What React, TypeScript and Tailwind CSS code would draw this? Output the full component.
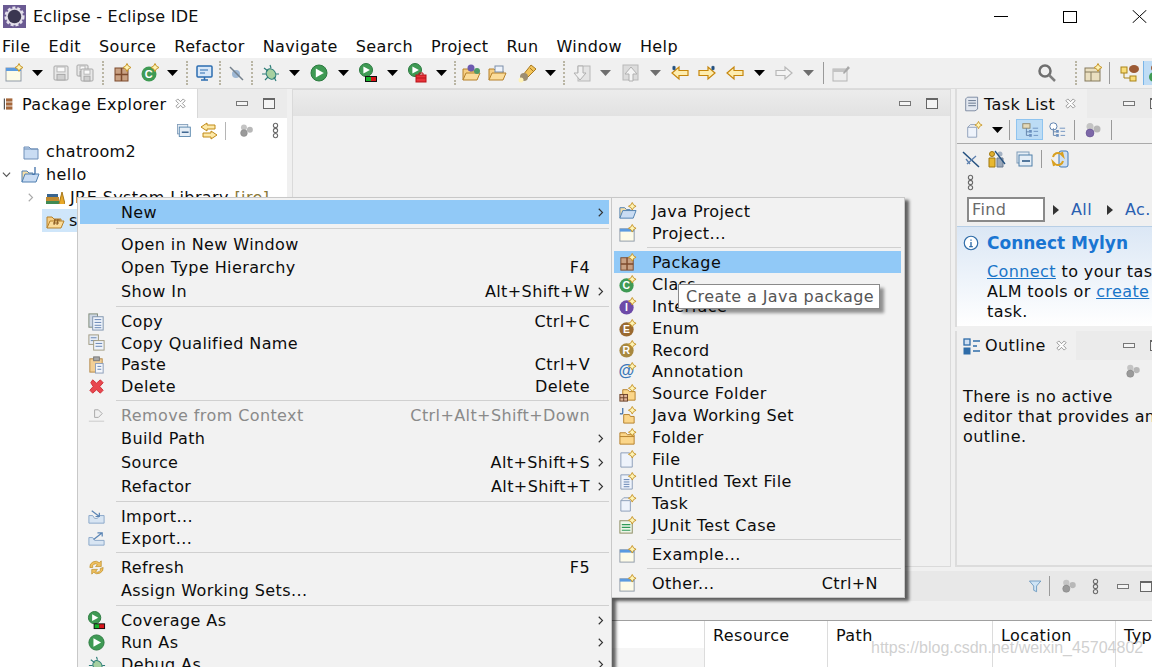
import type { ReactNode } from "react";

const Star = () => (
  <path d="M15 0.5l1.4 2.6 2.6 1.4-2.6 1.4L15 8.5l-1.4-2.6L11 4.500l2.600-1.400z" fill="#fdf3b5" stroke="#c8962a" strokeWidth="1" />
);

const Letter = ({ c, bg, fill = "#fff", size = 11 }: { c: string; bg: string; fill?: string; size?: number }) => (
  <>
    <circle cx="9" cy="11" r="7.500" fill={bg} />
    <text x="9" y="15" textAnchor="middle" fontSize={size} fontWeight="700" fontFamily="Liberation Sans, sans-serif" fill={fill}>{c}</text>
    <Star />
  </>
);

const RunDot = ({ cx = 10, cy = 10, r = 8 }: { cx?: number; cy?: number; r?: number }) => (
  <>
    <circle cx={cx} cy={cy} r={r} fill="#3f9a54" stroke="#2c7a40" />
    <path d={`M${cx - r * 0.4} ${cy - r * 0.55}L${cx + r * 0.6} ${cy}L${cx - r * 0.4} ${cy + r * 0.55}z`} fill="#fff" />
  </>
);

const Folder = ({ fill = "#fbdc9a", stroke = "#b5802a" }: { fill?: string; stroke?: string }) => (
  <>
    <path d="M2 17V6h5l2 2h7v2" fill="#f6cf85" stroke={stroke} />
    <path d="M2 17l3-7h14l-3 7z" fill={fill} stroke={stroke} />
  </>
);

const Page = ({ x = 3, w = 12 }: { x?: number; w?: number }) => (
  <path d={`M${x} 3h${w - 3}l3 3v12h-${w}z`} fill="#eef3fb" stroke="#8b9db8" />
);

const Lines = ({ x = 6, c = "#5f7fb0" }: { x?: number; c?: string }) => (
  <path d={`M${x} 8h6M${x} 10.500h6M${x} 13h6M${x} 15.500h6`} stroke={c} strokeWidth="1" />
);

const Win = () => (
  <>
    <rect x="2" y="5" width="15" height="13" fill="#fdfbe8" stroke="#8f9aa8" />
    <rect x="2" y="5" width="15" height="3" fill="#5b9be0" />
    <Star />
  </>
);

const Floppy = ({ x = 3, y = 3, s = 14 }: { x?: number; y?: number; s?: number }) => (
  <>
    <rect x={x} y={y} width={s} height={s} rx="1" fill="#e8e8e8" stroke="#a8a8a8" />
    <rect x={x + 3} y={y + 1} width={s - 6} height={s * 0.35} fill="#fafafa" stroke="#b8b8b8" />
    <rect x={x + 3} y={y + s * 0.6} width={s - 6} height={s * 0.4} fill="#cfcfcf" stroke="#a8a8a8" />
  </>
);

const Grid = () => (
  <>
    <rect x="3" y="5" width="13" height="13" fill="#c9a183" stroke="#7d4a2c" />
    <path d="M9.500 5v13M3 11.500h13" stroke="#7d4a2c" strokeWidth="1.500" />
    <Star />
  </>
);

const YArrow = ({ flip = false, dim = false, star = false }: { flip?: boolean; dim?: boolean; star?: boolean }) => (
  <g transform={flip ? "matrix(-1 0 0 1 20 0)" : undefined}>
    <path d="M2 10l7-6v3.500h9v5H9V16z" fill={dim ? "#f4f4f4" : "#fdedb0"} stroke={dim ? "#b8b8b8" : "#c6860c"} strokeWidth="1.200" />
    {star && <path d="M3 3l2 4M5 3L3 7M2 5h4" stroke="#23507f" strokeWidth="1.200" />}
  </g>
);

const Blob = ({ tone = "#9a9a9a", dark = "#7a7a7a" }: { tone?: string; dark?: string }) => (
  <>
    <circle cx="7" cy="6.500" r="3.500" fill="#c4c4c4" />
    <circle cx="14" cy="9" r="3.500" fill="#b8b8b8" />
    <circle cx="7" cy="13" r="4" fill={tone} stroke={dark} strokeWidth=".5" />
  </>
);

const Tree = ({ folderTop = true }: { folderTop?: boolean }) => (
  <>
    {folderTop ? <rect x="2" y="3" width="8" height="5" fill="#e4d9b8" stroke="#8c8468" /> : <circle cx="6" cy="6" r="4" fill="#fff" stroke="#4f76a8" />}
    <path d="M6 8v8h3M6 12h3" stroke="#6080a8" fill="none" />
    <rect x="9" y="10" width="3" height="3" fill="#6a8fbe" />
    <rect x="9" y="14.500" width="3" height="3" fill="#6a8fbe" />
    <path d="M13 8h6M14 11.500h5M14 16h5" stroke="#6a8fbe" />
  </>
);

const icons: Record<string, ReactNode> = {
  newwin: <Win />,
  save: <Floppy />,
  saveall: (
    <>
      <Floppy x={2} y={2} s={11} />
      <Floppy x={6} y={6} s={12} />
    </>
  ),
  pkg: <Grid />,
  cls: <Letter c="C" bg="#3f9a54" />,
  itf: <Letter c="I" bg="#6d4aa8" />,
  enm: <Letter c="E" bg="#9a6a30" />,
  rec: <Letter c="R" bg="#a9893f" />,
  ann: <Letter c="@" bg="#f2f2f2" fill="#3b78b8" size={17} />,
  monitor: (
    <>
      <rect x="3" y="3" width="15" height="11" rx="1" fill="#d9e8f8" stroke="#2b6cb0" strokeWidth="1.500" />
      <path d="M6 7h8M6 10h5" stroke="#2b6cb0" />
      <path d="M7 17h7M10.500 14v3" stroke="#2b6cb0" strokeWidth="1.500" />
    </>
  ),
  skip: (
    <>
      <circle cx="10" cy="11" r="4" fill="#9db7d4" />
      <path d="M4 4l13 13" stroke="#74808c" strokeWidth="1.500" />
    </>
  ),
  bug: (
    <>
      <ellipse cx="11" cy="11" rx="4.500" ry="5.500" transform="rotate(-35 11 11)" fill="#a6d0a0" stroke="#2d7d78" />
      <path d="M4 5l4 3M2 11h4M5 17l3-3M16 18l-2-4M19 11h-3M10 2l1 3" stroke="#2d7d78" strokeWidth="1.200" />
    </>
  ),
  run: <RunDot />,
  cov: (
    <>
      <RunDot cx={8} cy={7} r={6.500} />
      <rect x="7" y="13" width="12" height="6" fill="#111" />
      <rect x="8" y="14" width="5" height="4" fill="#17b32c" />
      <rect x="13" y="14" width="5" height="4" fill="#d8141a" />
    </>
  ),
  ext: (
    <>
      <RunDot cx={8} cy={7} r={6.500} />
      <rect x="9" y="12" width="10" height="7" fill="#e8333a" stroke="#b81218" />
      <path d="M12 12v-2h4v2M9 15h10" stroke="#b81218" fill="none" />
    </>
  ),
  opentype: (
    <>
      <Folder />
      <circle cx="10" cy="5" r="3.500" fill="#6d5ab0" />
      <circle cx="16" cy="8" r="3" fill="#4f9a68" />
    </>
  ),
  openres: (
    <>
      <Folder />
      <rect x="8" y="3" width="8" height="6" fill="#eef3fb" stroke="#7b8da8" />
    </>
  ),
  torch: (
    <>
      <path d="M6 12L14 2l5 4-9 9z" fill="#f2c45a" stroke="#a87820" />
      <path d="M13 5l3 3" stroke="#a87820" />
      <circle cx="7" cy="14" r="4" fill="#9d8d70" />
      <circle cx="4" cy="17" r="2.500" fill="#fff3b8" />
    </>
  ),
  down: (
    <>
      <rect x="6" y="3" width="12" height="15" fill="#e4e4e4" stroke="#b8b8b8" />
      <path d="M6 3h5v7h3l-6 7-6-7h4z" fill="#f0f0f0" stroke="#b0b0b0" />
    </>
  ),
  up: (
    <>
      <rect x="2" y="2" width="15" height="15" fill="#dcdcdc" stroke="#b8b8b8" />
      <path d="M8 18v-7H4l6-7 6 7h-4v7z" fill="#f4f4f4" stroke="#b0b0b0" />
    </>
  ),
  back2: <YArrow star />,
  fwd2: <YArrow flip star />,
  left: <YArrow />,
  right: <YArrow flip dim />,
  pin: (
    <>
      <rect x="2" y="6" width="14" height="12" fill="#eeeeee" stroke="#b4b4b4" />
      <rect x="2" y="6" width="14" height="3" fill="#c4c4c4" />
      <path d="M12 10l5-7 2 2-6 6z" fill="#a8a8a8" />
    </>
  ),
  search: (
    <>
      <circle cx="8" cy="8" r="5.500" fill="none" stroke="#6f6f6f" strokeWidth="2.500" />
      <path d="M12 12l6 6" stroke="#7f7f7f" strokeWidth="2.500" />
    </>
  ),
  persp: (
    <>
      <rect x="2" y="5" width="15" height="13" fill="#eadfc0" stroke="#857a5c" />
      <path d="M2 9h15M8 9v9" stroke="#857a5c" />
      <Star />
    </>
  ),
  hier: (
    <>
      <rect x="1" y="4" width="6" height="6" fill="#f9dd7a" stroke="#a98318" />
      <rect x="10" y="13" width="6" height="5" fill="#f9dd7a" stroke="#a98318" />
      <path d="M4 10v5h6" stroke="#a98318" fill="none" />
      <ellipse cx="14" cy="6" rx="5" ry="4" fill="#9c5a34" />
    </>
  ),
  javap: (
    <>
      <circle cx="10" cy="5" r="3" fill="#9c5a34" />
      <circle cx="10" cy="14" r="5" fill="#3f9a54" />
    </>
  ),
  pkgex: (
    <>
      <path d="M3 3v14" stroke="#555" strokeWidth="1.500" />
      <rect x="5" y="3" width="8" height="4" fill="#a5673b" />
      <rect x="5" y="8" width="8" height="4" fill="#a5673b" />
      <rect x="5" y="13" width="8" height="4" fill="#a5673b" />
    </>
  ),
  collapse: (
    <>
      <rect x="3" y="3" width="12" height="11" fill="#e6eef6" stroke="#7f9cb8" />
      <rect x="5" y="6" width="13" height="11" fill="#e6eef6" stroke="#4f7fa8" />
      <path d="M8 12h8" stroke="#23507f" strokeWidth="1.500" />
    </>
  ),
  link: (
    <>
      <path d="M8 2L2 6l6 4V8h8V4H8z" fill="#fde9a8" stroke="#c08a18" />
      <path d="M12 10l6 4-6 4v-2H4v-4h8z" fill="#fde9a8" stroke="#c08a18" />
    </>
  ),
  gray: <Blob />,
  purple: <Blob tone="#7d68a8" dark="#5d4888" />,
  chain: (
    <>
      <circle cx="10" cy="4" r="2.500" fill="none" stroke="#6c6c6c" strokeWidth="1.300" />
      <circle cx="10" cy="10" r="2.500" fill="none" stroke="#6c6c6c" strokeWidth="1.300" />
      <circle cx="10" cy="16" r="2.500" fill="none" stroke="#6c6c6c" strokeWidth="1.300" />
    </>
  ),
  proj: (
    <>
      <path d="M3 17V5h5l2 2h7v10z" fill="#c9dcf3" stroke="#6f8fb8" />
      <path d="M3 7h14" stroke="#6f8fb8" />
    </>
  ),
  jproj: (
    <>
      <path d="M2 17V6h5l2 2h4" fill="#f6dfa8" stroke="#4f7fb0" />
      <path d="M2 17l3-8h14l-3 8z" fill="#c9dcf3" stroke="#4f7fb0" />
      <path d="M15 2v6q0 2-3 1" fill="none" stroke="#3f6fa8" strokeWidth="1.300" />
    </>
  ),
  jprojn: (
    <>
      <path d="M2 17V6h5l2 2h4" fill="#f6dfa8" stroke="#4f7fb0" />
      <path d="M2 17l3-8h14l-3 8z" fill="#c9dcf3" stroke="#4f7fb0" />
      <Star />
    </>
  ),
  src: (
    <>
      <Folder />
      <path d="M9 9h6M8 12h6M10 8l-1 6M13 8l-1 6" stroke="#8a5a20" />
    </>
  ),
  lib: (
    <>
      <rect x="1" y="13" width="13" height="3" fill="#3f8a54" />
      <rect x="1" y="9" width="13" height="4" fill="#c08a30" />
      <rect x="2" y="6" width="11" height="3" fill="#39658f" />
      <path d="M14 16l3-12 3 12" fill="#e8a828" stroke="#a87818" />
    </>
  ),
  task: (
    <>
      <path d="M4 2h12v14l-3 2H2V4z" fill="#e3e8f0" stroke="#6f7f98" />
      <path d="M5 6h9M5 9h9M5 12h9" stroke="#54647e" />
    </>
  ),
  tasknew: (
    <>
      <path d="M3 7h10v11H3z" fill="#eef3fb" stroke="#8b9db8" />
      <path d="M3 7l3-3h6" fill="none" stroke="#8b9db8" />
      <Star />
    </>
  ),
  treea: <Tree />,
  treeb: <Tree folderTop={false} />,
  xline: (
    <>
      <path d="M2 3l16 15" stroke="#23507f" strokeWidth="1.500" />
      <path d="M6 15l9-8M5 10l4 5" stroke="#5b7fae" strokeWidth="1.300" />
    </>
  ),
  people: (
    <>
      <circle cx="6" cy="5" r="2.500" fill="#e0b030" stroke="#a07810" />
      <path d="M3 9h6v9H3z" fill="#e8b830" stroke="#a07810" />
      <circle cx="14" cy="5" r="2.500" fill="#a4b2c4" />
      <path d="M11 9h6v9h-6z" fill="#9aa8ba" stroke="#6a7a90" />
      <path d="M9 2l10 13" stroke="#23507f" strokeWidth="1.300" />
    </>
  ),
  sync: (
    <>
      <rect x="9" y="2" width="9" height="16" rx="2" fill="#cfe0f3" stroke="#3f78b8" />
      <path d="M3 8a5 5 0 0 1 8-3l2 2-1-4M13 12a5 5 0 0 1-8 3l-2-2 1 4" fill="none" stroke="#d8a020" strokeWidth="2" />
    </>
  ),
  info: (
    <>
      <circle cx="10" cy="10" r="7.500" fill="#fff" stroke="#2f6ca8" strokeWidth="1.300" />
      <path d="M10 6v1.500M10 9v5M8 14h4" stroke="#2f6ca8" strokeWidth="1.500" />
    </>
  ),
  outline: (
    <>
      <rect x="2" y="3" width="6" height="6" fill="#cfe0f3" stroke="#2f6ca8" strokeWidth="1.300" />
      <rect x="2" y="12" width="6" height="6" fill="#2f6ca8" stroke="#2f6ca8" />
      <path d="M11 5h7M11 10h4M11 15h7" stroke="#2f6ca8" strokeWidth="1.300" />
    </>
  ),
  copy: (
    <>
      <rect x="2" y="2" width="9" height="14" fill="#cfd8e4" stroke="#7e8a78" />
      <rect x="6" y="5" width="11" height="14" fill="#eef3fb" stroke="#7f93ad" />
      <path d="M8 8h7M8 11h7M8 14h7M8 16.500h7" stroke="#6483b2" />
    </>
  ),
  copyq: (
    <>
      <rect x="2" y="2" width="10" height="10" fill="#e6ecf5" stroke="#a09a80" />
      <path d="M4 5h6M4 8h6" stroke="#6483b2" />
      <rect x="7" y="8" width="11" height="10" fill="#eef3fb" stroke="#a09a80" />
      <path d="M9 11h7M9 14h7" stroke="#6483b2" />
    </>
  ),
  paste: (
    <>
      <rect x="3" y="4" width="13" height="14" fill="#f2cf96" stroke="#b58a4a" />
      <rect x="7" y="2" width="6" height="4" fill="#a8a8a8" stroke="#787878" />
      <rect x="9" y="9" width="8" height="10" fill="#f4f7fc" stroke="#8b9db8" />
      <path d="M11 12h4M11 15h4" stroke="#6483b2" />
    </>
  ),
  del: <path d="M4 6l2-3 4 3.500L14 3l3 3-3.500 4 3.500 4-3 3-4-3.500L6 17l-3-3 3.500-4z" fill="#e8474f" stroke="#d03038" />,
  remove: (
    <>
      <path d="M8 4h4l4 4-4 4H8z" fill="#f0f0f0" stroke="#a8a8a8" />
      <path d="M2 16h16" stroke="#c8c8c8" />
    </>
  ),
  imp: (
    <>
      <path d="M2 9v8h16V9h-5l-2 3H8L6 9z" fill="#d8e5f3" stroke="#8aa7c8" />
      <path d="M5 4l8 6M13 6v4H9" fill="none" stroke="#5b85b5" strokeWidth="1.300" />
    </>
  ),
  exp: (
    <>
      <path d="M2 9v8h16v-5H8L6 9z" fill="#d8e5f3" stroke="#8aa7c8" />
      <path d="M7 11l9-7M11 4h5v4" fill="none" stroke="#5b85b5" strokeWidth="1.300" />
    </>
  ),
  refresh: <path d="M3 10a6 6 0 0 1 10-5l2-2v6h-6l2-2a3 3 0 0 0-5 3zM17 10a6 6 0 0 1-10 5l-2 2v-5h6l-2 2a3 3 0 0 0 5-3z" fill="#f0c060" stroke="#b88a20" strokeWidth=".7" />,
  folder: (
    <>
      <path d="M2 17V5h6l2 2h7v10z" fill="#fbd68a" stroke="#b5802a" />
      <path d="M2 9h15" stroke="#b5802a" />
      <Star />
    </>
  ),
  srcf: (
    <>
      <path d="M5 15V6h5l2 2h6v9H9" fill="#fbd68a" stroke="#b5802a" />
      <rect x="2" y="11" width="8" height="7" fill="#e0b59a" stroke="#6a4028" />
      <path d="M6 11v7M2 14.500h8" stroke="#6a4028" />
      <Star />
    </>
  ),
  jws: (
    <>
      <path d="M5 2v5q0 2-3 1" fill="none" stroke="#3f6fa8" strokeWidth="1.300" />
      <path d="M6 18V9h6l1 2h4v7z" fill="#fbd68a" stroke="#b5802a" />
      <Star />
    </>
  ),
  file: (
    <>
      <Page />
      <Star />
    </>
  ),
  untitled: (
    <>
      <Page />
      <Lines />
      <Star />
    </>
  ),
  junit: (
    <>
      <rect x="2" y="5" width="13" height="13" fill="#eef5e8" stroke="#8a8a60" />
      <path d="M4 9h9M4 12h9M4 15h9" stroke="#2f9a58" strokeWidth="1.300" />
      <Star />
    </>
  ),
};

function Ico({ n, box = "w-[20px] h-[20px]" }: { n: string; box?: string }) {
  return (
    <svg viewBox="0 0 20 20" className={`${box} shrink-0`}>
      {icons[n]}
    </svg>
  );
}

const Drop = ({ dim = false }: { dim?: boolean }) => (
  <svg viewBox="0 0 11 6" className="w-[11px] h-[6px]">
    <path d="M0 0h11L5.500 6z" fill={dim ? "#6e6e6e" : "#000"} />
  </svg>
);

const Dots = () => <div className="h-[24px] border-l-2 border-dotted border-[#b9b5a4]" />;
const Bar = () => <div className="h-[22px] w-px bg-[#9a9a9a]" />;

const Slot = ({ w, children }: { w: string; children: ReactNode }) => (
  <div className={`${w} flex shrink-0 items-center justify-center`}>{children}</div>
);

const Minimize = () => <div className="h-[5px] w-[12px] border border-[#777] bg-[#f4f4f4]" />;
const Maximize = () => <div className="h-[11px] w-[12px] border border-[#666] border-t-2 bg-[#f4f4f4]" />;

const TabClose = () => (
  <svg viewBox="0 0 12 12" className="h-[11px] w-[11px]">
    <path d="M1 3l2-2 3 3 3-3 2 2-3 3 3 3-2 2-3-3-3 3-2-2 3-3z" fill="#fff" stroke="#777" strokeWidth=".8" />
  </svg>
);

const Chevron = ({ dark = true }: { dark?: boolean }) => (
  <svg viewBox="0 0 8 12" className="h-[9px] w-[6px]">
    <path d="M1 1l5 5-5 5" fill="none" stroke={dark ? "#333" : "#aaa"} strokeWidth="1.500" />
  </svg>
);

type Row = { t?: string; h: string; i?: string; k?: string; sub?: boolean; on?: boolean; off?: boolean };

const mainRows: Row[] = [
  { t: "New", h: "h-[24px]", sub: true, on: true },
  { h: "h-[8px]" },
  { t: "Open in New Window", h: "h-[23px]" },
  { t: "Open Type Hierarchy", h: "h-[24px]", k: "F4" },
  { t: "Show In", h: "h-[24px]", k: "Alt+Shift+W", sub: true },
  { h: "h-[7px]" },
  { t: "Copy", h: "h-[22px]", i: "copy", k: "Ctrl+C" },
  { t: "Copy Qualified Name", h: "h-[21px]", i: "copyq" },
  { t: "Paste", h: "h-[22px]", i: "paste", k: "Ctrl+V" },
  { t: "Delete", h: "h-[22px]", i: "del", k: "Delete" },
  { h: "h-[7px]" },
  { t: "Remove from Context", h: "h-[22px]", i: "remove", k: "Ctrl+Alt+Shift+Down", off: true },
  { t: "Build Path", h: "h-[24px]", sub: true },
  { t: "Source", h: "h-[24px]", k: "Alt+Shift+S", sub: true },
  { t: "Refactor", h: "h-[24px]", k: "Alt+Shift+T", sub: true },
  { h: "h-[7px]" },
  { t: "Import...", h: "h-[22px]", i: "imp" },
  { t: "Export...", h: "h-[22px]", i: "exp" },
  { h: "h-[7px]" },
  { t: "Refresh", h: "h-[22px]", i: "refresh", k: "F5" },
  { t: "Assign Working Sets...", h: "h-[23px]" },
  { h: "h-[8px]" },
  { t: "Coverage As", h: "h-[22px]", i: "cov", sub: true },
  { t: "Run As", h: "h-[22px]", i: "run", sub: true },
  { t: "Debug As", h: "h-[22px]", i: "bug", sub: true },
];

const subRows: Row[] = [
  { t: "Java Project", h: "h-[22px]", i: "jprojn" },
  { t: "Project...", h: "h-[22px]", i: "newwin" },
  { h: "h-[7px]" },
  { t: "Package", h: "h-[22px]", i: "pkg", on: true },
  { t: "Class", h: "h-[22px]", i: "cls" },
  { t: "Interface", h: "h-[22px]", i: "itf" },
  { t: "Enum", h: "h-[22px]", i: "enm" },
  { t: "Record", h: "h-[21px]", i: "rec" },
  { t: "Annotation", h: "h-[22px]", i: "ann" },
  { t: "Source Folder", h: "h-[22px]", i: "srcf" },
  { t: "Java Working Set", h: "h-[22px]", i: "jws" },
  { t: "Folder", h: "h-[22px]", i: "folder" },
  { t: "File", h: "h-[22px]", i: "file" },
  { t: "Untitled Text File", h: "h-[22px]", i: "untitled" },
  { t: "Task", h: "h-[22px]", i: "tasknew" },
  { t: "JUnit Test Case", h: "h-[22px]", i: "junit" },
  { h: "h-[7px]" },
  { t: "Example...", h: "h-[22px]", i: "newwin" },
  { h: "h-[7px]" },
  { t: "Other...", h: "h-[22px]", i: "newwin", k: "Ctrl+N" },
];

function MainMenu() {
  return (
    <div className="absolute left-[77px] top-[197px] w-[535px] border border-[#c8c8c8] bg-[#f2f2f2] px-[2px] pt-[2px] shadow-[4px_3px_3px_rgba(0,0,0,0.6)]">
      {mainRows.map((r, idx) =>
        r.t ? (
          <div key={idx} className={`${r.h} flex items-center ${r.on ? "bg-[#91c9f7]" : ""} ${r.off ? "text-[#8a8a8a]" : ""}`}>
            <div className="flex w-[32px] justify-center">{r.i && <Ico n={r.i} box="w-[19px] h-[19px]" />}</div>
            <span className="flex-1 pl-[9px] pt-[2px]">{r.t}</span>
            {r.k && <span className="pt-[2px]">{r.k}</span>}
            <div className="flex w-[19px] justify-end pr-[5px]">{r.sub && <Chevron />}</div>
          </div>
        ) : (
          <div key={idx} className={`${r.h} ml-[36px] flex items-center`}>
            <div className="h-px w-full bg-[#d0d0d0]" />
          </div>
        ),
      )}
    </div>
  );
}

function SubMenu() {
  return (
    <div className="absolute left-[611px] top-[197px] w-[294px] border border-[#c8c8c8] bg-[#f2f2f2] pb-[3px] pl-[2px] pr-[3px] pt-[2px] shadow-[4px_3px_3px_rgba(0,0,0,0.6)]">
      {subRows.map((r, idx) =>
        r.t ? (
          <div key={idx} className={`${r.h} flex items-center ${r.on ? "bg-[#91c9f7]" : ""}`}>
            <div className="flex w-[26px] justify-center">{r.i && <Ico n={r.i} box="w-[19px] h-[19px]" />}</div>
            <span className="flex-1 pl-[12px] pt-[2px]">{r.t}</span>
            {r.k && <span className="pr-[23px] pt-[2px]">{r.k}</span>}
          </div>
        ) : (
          <div key={idx} className={`${r.h} ml-[33px] flex items-center`}>
            <div className="h-px w-full bg-[#d0d0d0]" />
          </div>
        ),
      )}
    </div>
  );
}

const TabBar = ({ children }: { children: ReactNode }) => (
  <div className="flex h-[29px] shrink-0 items-center bg-[#ebebeb]">{children}</div>
);

export default function App() {
  return (
    <div className="relative flex h-[667px] w-[1152px] flex-col overflow-hidden bg-[#f0f0f0] font-['DejaVu_Sans',sans-serif] text-[16px] leading-none tracking-[0.4px] text-[#0c0c0c]">
      {/* title bar */}
      <div className="flex h-[35px] shrink-0 items-center bg-white pb-[2px] pl-[3px]">
        <svg viewBox="0 0 24 24" className="h-[23px] w-[23px]">
          <rect width="24" height="24" fill="#6a5a92" />
          <circle cx="12" cy="12" r="9" fill="#d8d4e0" strokeDasharray="3 2" stroke="#e4e0ec" strokeWidth="3" />
          <circle cx="12" cy="12" r="7" fill="#3a3650" />
        </svg>
        <span className="ml-[7px] tracking-[0.25px]">Eclipse - Eclipse IDE</span>
        <div className="ml-auto flex items-center pr-[5px]">
          <div className="h-px w-[14px] bg-black" />
          <div className="ml-[55px] h-[12px] w-[14px] border border-black" />
          <svg viewBox="0 0 14 13" className="ml-[55px] h-[13px] w-[15px]">
            <path d="M0 0l14 13M14 0L0 13" stroke="#000" />
          </svg>
        </div>
      </div>
      {/* menu bar */}
      <div className="flex h-[23px] shrink-0 items-center gap-[18px] bg-white pl-[2px] pt-[1px]">
        {["File", "Edit", "Source", "Refactor", "Navigate", "Search", "Project", "Run", "Window", "Help"].map((m) => (
          <span key={m}>{m}</span>
        ))}
      </div>
      {/* main toolbar */}
      <div className="flex h-[30px] shrink-0 items-center pl-[3px]">
        <Slot w="w-[22px]"><Ico n="newwin" /></Slot>
        <Slot w="w-[24px]"><Drop /></Slot>
        <Slot w="w-[24px]"><Ico n="save" /></Slot>
        <Slot w="w-[24px]"><Ico n="saveall" /></Slot>
        <Slot w="w-[12px]"><Dots /></Slot>
        <Slot w="w-[26px]"><Ico n="pkg" /></Slot>
        <Slot w="w-[30px]"><Ico n="cls" /></Slot>
        <Slot w="w-[14px]"><Drop /></Slot>
        <Slot w="w-[16px]"><Dots /></Slot>
        <Slot w="w-[18px]"><Ico n="monitor" /></Slot>
        <Slot w="w-[14px]"><Dots /></Slot>
        <Slot w="w-[18px]"><Ico n="skip" /></Slot>
        <Slot w="w-[14px]"><Dots /></Slot>
        <Slot w="w-[22px]"><Ico n="bug" /></Slot>
        <Slot w="w-[26px]"><Drop /></Slot>
        <Slot w="w-[24px]"><Ico n="run" /></Slot>
        <Slot w="w-[24px]"><Drop /></Slot>
        <Slot w="w-[26px]"><Ico n="cov" /></Slot>
        <Slot w="w-[22px]"><Drop /></Slot>
        <Slot w="w-[28px]"><Ico n="ext" /></Slot>
        <Slot w="w-[20px]"><Drop /></Slot>
        <Slot w="w-[8px]"><Dots /></Slot>
        <Slot w="w-[24px]"><Ico n="opentype" /></Slot>
        <Slot w="w-[28px]"><Ico n="openres" /></Slot>
        <Slot w="w-[32px]"><Ico n="torch" /></Slot>
        <Slot w="w-[14px]"><Drop /></Slot>
        <Slot w="w-[14px]"><Dots /></Slot>
        <Slot w="w-[22px]"><Ico n="down" /></Slot>
        <Slot w="w-[24px]"><Drop dim /></Slot>
        <Slot w="w-[28px]"><Ico n="up" /></Slot>
        <Slot w="w-[20px]"><Drop dim /></Slot>
        <Slot w="w-[30px]"><Ico n="back2" /></Slot>
        <Slot w="w-[24px]"><Ico n="fwd2" /></Slot>
        <Slot w="w-[32px]"><Ico n="left" /></Slot>
        <Slot w="w-[16px]"><Drop /></Slot>
        <Slot w="w-[34px]"><Ico n="right" /></Slot>
        <Slot w="w-[14px]"><Drop dim /></Slot>
        <Slot w="w-[16px]"><Bar /></Slot>
        <Slot w="w-[20px]"><Ico n="pin" /></Slot>
        <div className="flex-1" />
        <Slot w="w-[24px]"><Ico n="search" /></Slot>
        <div className="w-[9px]" />
        <Slot w="w-[16px]"><Dots /></Slot>
        <Slot w="w-[18px]"><Ico n="persp" /></Slot>
        <Slot w="w-[14px]"><Bar /></Slot>
        <Slot w="w-[27px]"><Ico n="hier" /></Slot>
        <div className="flex h-[24px] w-[9px] shrink-0 items-center overflow-hidden border-l border-[#7ab5e8] bg-[#bfdcf5]">
          <Ico n="javap" />
        </div>
      </div>
      {/* workbench */}
      <div className="flex min-h-0 flex-1 border-t border-[#dcdcdc]">
        {/* package explorer */}
        <div className="flex w-[287px] shrink-0 flex-col bg-white">
          <TabBar>
            <div className="flex h-full w-[198px] shrink-0 items-center border-r border-[#d8d8d8] bg-white pl-[2px]">
              <Ico n="pkgex" box="w-[16px] h-[16px]" />
              <span className="ml-[4px] whitespace-nowrap pt-[2px]">Package Explorer</span>
              <div className="ml-[9px]"><TabClose /></div>
            </div>
            <div className="ml-[38px]"><Minimize /></div>
            <div className="ml-[15px]"><Maximize /></div>
          </TabBar>
          <div className="flex h-[22px] shrink-0 items-center pl-[173px] pt-[3px]">
            <Slot w="w-[20px]"><Ico n="collapse" box="w-[17px] h-[17px]" /></Slot>
            <Slot w="w-[32px]"><Ico n="link" /></Slot>
            <div className="h-[18px] w-px bg-[#b5b5b5]" />
            <Slot w="w-[41px]"><Ico n="gray" box="w-[17px] h-[17px]" /></Slot>
            <Ico n="chain" box="w-[17px] h-[17px]" />
          </div>
          <div className="flex h-[23px] items-center pl-[21px]">
            <Ico n="proj" />
            <span className="ml-[5px]">chatroom2</span>
          </div>
          <div className="flex h-[23px] items-center pl-[2px]">
            <svg viewBox="0 0 10 10" className="h-[9px] w-[9px]">
              <path d="M1 3l4 4 4-4" fill="none" stroke="#555" strokeWidth="1.300" />
            </svg>
            <div className="ml-[9px]"><Ico n="jproj" /></div>
            <span className="ml-[6px]">hello</span>
          </div>
          <div className="flex h-[23px] items-center pl-[28px]">
            <Chevron dark={false} />
            <div className="ml-[11px]"><Ico n="lib" /></div>
            <span className="ml-[5px] whitespace-nowrap">JRE System Library <span className="text-[#8a7a3a]">[jre]</span></span>
          </div>
          <div className="ml-[42px] flex h-[23px] items-center bg-[#cfe6fa] pl-[3px]">
            <Ico n="src" />
            <span className="ml-[4px]">src</span>
          </div>
        </div>
        <div className="w-[5px] shrink-0" />
        {/* editor area and right stack */}
        <div className="flex min-w-0 flex-1 flex-col">
          <div className="flex h-[478px] shrink-0">
            <div className="flex w-[659px] shrink-0 flex-col border border-[#dadada]">
              <div className="flex h-[26px] items-center justify-end gap-[15px] bg-gradient-to-b from-[#ececec] to-[#e2e2e2] pr-[12px]">
                <Minimize />
                <Maximize />
              </div>
            </div>
            <div className="w-[4px] shrink-0" />
            <div className="flex min-w-0 flex-1 flex-col overflow-hidden">
              {/* task list */}
              <div className="flex h-[238px] shrink-0 flex-col border-l-2 border-[#dcdcdc]">
                <TabBar>
                  <div className="flex h-full w-[130px] shrink-0 items-center bg-[#f0f0f0] pl-[7px]">
                    <Ico n="task" box="w-[17px] h-[18px]" />
                    <span className="ml-[3px] whitespace-nowrap pt-[2px]">Task List</span>
                    <div className="ml-[10px]"><TabClose /></div>
                  </div>
                  <div className="ml-[36px]"><Minimize /></div>
                  <div className="ml-[15px]"><Maximize /></div>
                </TabBar>
                <div className="flex h-[26px] shrink-0 items-center border-b border-[#aaaaaa] pb-[2px] pl-[6px]">
                  <Slot w="w-[22px]"><Ico n="tasknew" box="w-[18px] h-[18px]" /></Slot>
                  <Slot w="w-[24px]"><Drop /></Slot>
                  <div className="mr-[6px] h-[20px] w-px bg-[#9a9a9a]" />
                  <div className="flex h-[21px] w-[27px] items-center justify-center border border-[#8fc4ef] bg-[#bcdcf5]">
                    <Ico n="treea" box="w-[20px] h-[18px]" />
                  </div>
                  <Slot w="w-[28px]"><Ico n="treeb" box="w-[20px] h-[18px]" /></Slot>
                  <div className="ml-[3px] h-[20px] w-px bg-[#9a9a9a]" />
                  <Slot w="w-[36px]"><Ico n="purple" /></Slot>
                  <div className="h-[20px] w-px bg-[#9a9a9a]" />
                </div>
                <div className="flex h-[28px] shrink-0 items-center pl-[4px] pt-[1px]">
                  <Slot w="w-[20px]"><Ico n="xline" /></Slot>
                  <Slot w="w-[30px]"><Ico n="people" /></Slot>
                  <Slot w="w-[26px]"><Ico n="collapse" /></Slot>
                  <div className="ml-[4px] h-[18px] w-px bg-[#9a9a9a]" />
                  <Slot w="w-[36px]"><Ico n="sync" /></Slot>
                </div>
                <div className="flex h-[20px] shrink-0 items-center pl-[5px]">
                  <Ico n="chain" box="w-[17px] h-[17px]" />
                </div>
                <div className="mt-[5px] flex h-[25px] shrink-0 items-center pl-[10px] text-[#2a5fb0]">
                  <div className="flex h-full w-[78px] shrink-0 items-center border-2 border-[#8a8a8a] bg-white pl-[3px] text-[#6a6a6a]">Find</div>
                  <svg viewBox="0 0 6 10" className="ml-[8px] h-[10px] w-[6px] shrink-0"><path d="M0 0l6 5-6 5z" fill="#333" /></svg>
                  <span className="ml-[12px] shrink-0">All</span>
                  <svg viewBox="0 0 6 10" className="ml-[15px] h-[10px] w-[6px] shrink-0"><path d="M0 0l6 5-6 5z" fill="#333" /></svg>
                  <span className="ml-[12px] shrink-0 whitespace-nowrap">Ac...</span>
                </div>
                <div className="mt-[4px] flex h-[100px] min-w-0 flex-col border-t border-[#b8cfe6] bg-gradient-to-b from-[#dbe7f5] to-white pl-[5px]">
                  <div className="flex h-[32px] shrink-0 items-center">
                    <Ico n="info" box="w-[18px] h-[18px]" />
                    <span className="ml-[7px] whitespace-nowrap text-[17px] font-bold tracking-normal text-[#1a75d2]">Connect Mylyn</span>
                  </div>
                  <div className="whitespace-nowrap pl-[25px] pt-[3px] leading-[20px]">
                    <a className="text-[#1a75c8] underline">Connect</a> to your task<br />
                    ALM tools or <a className="text-[#1a75c8] underline">create</a> a<br />
                    task.
                  </div>
                </div>
              </div>
              {/* outline */}
              <div className="mt-[4px] flex min-h-0 flex-1 flex-col border-b-2 border-l-2 border-[#dcdcdc]">
                <TabBar>
                  <div className="flex h-full w-[119px] shrink-0 items-center bg-[#f0f0f0] pl-[5px]">
                    <Ico n="outline" box="w-[20px] h-[20px]" />
                    <span className="ml-[3px]">Outline</span>
                    <div className="ml-[10px]"><TabClose /></div>
                  </div>
                  <div className="ml-[47px]"><Minimize /></div>
                  <div className="ml-[15px]"><Maximize /></div>
                </TabBar>
                <div className="flex justify-end pr-[10px] pt-[2px]"><Ico n="gray" box="w-[18px] h-[18px]" /></div>
                <div className="whitespace-nowrap pl-[6px] pt-[7px] leading-[20px]">
                  There is no active<br />
                  editor that provides an<br />
                  outline.
                </div>
              </div>
            </div>
          </div>
          {/* problems pane */}
          <div className="mt-[4px] flex min-h-0 flex-1 flex-col">
            <div className="flex h-[30px] shrink-0 items-center bg-[#e8e8e8] pl-[736px]">
              <svg viewBox="0 0 20 20" className="h-[18px] w-[20px]">
                <path d="M2 3h16l-6 7v8l-4-2v-6z" fill="#cfe4f5" stroke="#4f86b5" />
              </svg>
              <div className="ml-[7px] h-[20px] w-px bg-[#9a9a9a]" />
              <div className="ml-[10px]"><Ico n="gray" box="w-[18px] h-[18px]" /></div>
              <div className="ml-[9px]"><Ico n="chain" box="w-[17px] h-[17px]" /></div>
              <div className="ml-[13px]"><Minimize /></div>
              <div className="ml-[11px]"><Maximize /></div>
            </div>
            <div className="h-[20px] shrink-0 border-b border-[#a0a0a0]" />
            <div className="flex min-h-0 flex-1 bg-white">
              <div className="flex w-[412px] shrink-0 flex-col">
                <div className="h-[27px]" />
                <div className="flex-1 bg-[#f5f5f5]" />
              </div>
              <div className="w-[123px] shrink-0 border-l border-[#dcdcdc] pl-[8px] pt-[7px]">Resource</div>
              <div className="w-[165px] shrink-0 border-l border-[#dcdcdc] pl-[8px] pt-[7px]">Path</div>
              <div className="w-[123px] shrink-0 border-l border-[#dcdcdc] pl-[8px] pt-[7px]">Location</div>
              <div className="flex-1 whitespace-nowrap border-l border-[#dcdcdc] pl-[8px] pt-[7px]">Type</div>
            </div>
          </div>
        </div>
      </div>

      <MainMenu />
      <SubMenu />
      {/* tooltip */}
      <div className="absolute left-[678px] top-[284px] flex h-[25px] w-[202px] items-center whitespace-nowrap border border-[#8a8a8a] bg-white pl-[7px] text-[#555] shadow-[4px_4px_3px_rgba(0,0,0,0.4)]">
        Create a Java package
      </div>
      {/* watermark */}
      <div className="pointer-events-none absolute left-[871px] top-[640px] font-['Liberation_Sans',sans-serif] text-[16px] tracking-normal text-[#c4c4c4]/80">
        https://blog.csdn.net/weixin_45704802
      </div>
    </div>
  );
}
